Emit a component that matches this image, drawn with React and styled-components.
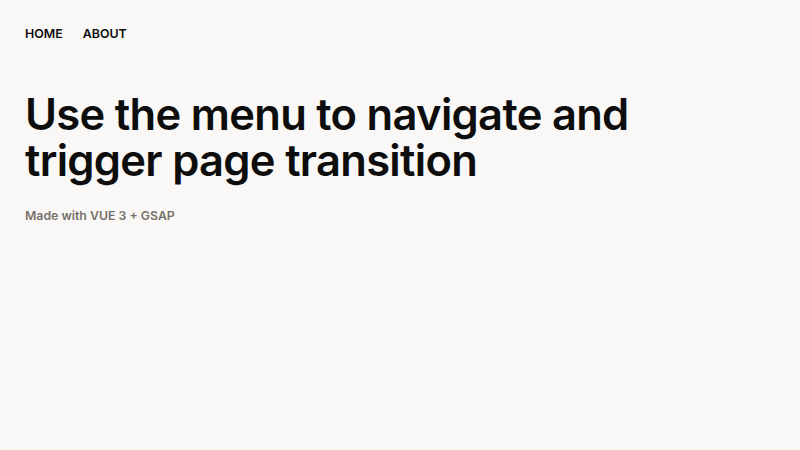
import React from "react";
import styled, { createGlobalStyle } from "styled-components";

const GlobalStyle = createGlobalStyle`
  html, body {
    margin: 0;
    padding: 0;
    background: #f9f8f6;
  }
  body {
    font-family: Inter, "Liberation Sans", sans-serif;
    color: #0d0d0d;
    -webkit-font-smoothing: antialiased;
  }
`;

const Page = styled.div`
  min-height: 100vh;
  padding: 0 25px;
  box-sizing: border-box;
`;

const Nav = styled.nav`
  display: flex;
  gap: 20px;
  padding-top: 26px;
`;

const NavLink = styled.a`
  font-size: 12.4px;
  font-weight: 600;
  line-height: 16px;
  color: #0d0d0d;
  text-decoration: none;
  text-transform: uppercase;
  cursor: pointer;
`;

const Hero = styled.main`
  padding-top: 49px;
`;

const Title = styled.h1`
  margin: 0;
  font-size: 43.5px;
  font-weight: 600;
  line-height: 46px;
  letter-spacing: -0.7px;
  max-width: 640px;
`;

const Credit = styled.p`
  margin: 25px 0 0;
  font-size: 12.3px;
  font-weight: 600;
  color: #77716c;
`;

export default function App() {
  return (
    <>
      <GlobalStyle />
      <Page>
        <Nav>
          <NavLink>Home</NavLink>
          <NavLink>About</NavLink>
        </Nav>
        <Hero>
          <Title>
            Use the menu to navigate and
            <br />
            trigger page transition
          </Title>
          <Credit>Made with VUE 3 + GSAP</Credit>
        </Hero>
      </Page>
    </>
  );
}
